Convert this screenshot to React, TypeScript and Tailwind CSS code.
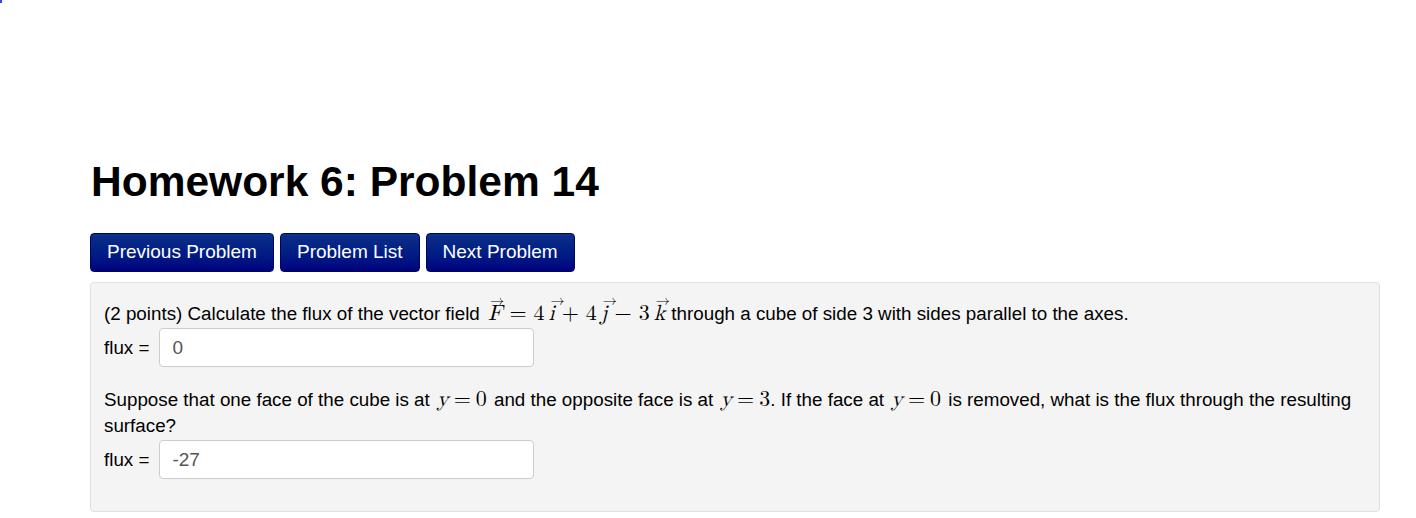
const mathFont = { fontFamily: '"Latin Modern Math", "DejaVu Serif", "Liberation Serif", serif' };

function Vec({ ch, lead = false }: { ch: string; lead?: boolean }) {
  return (
    <span className={`relative inline-block italic ${lead ? "ml-[4px]" : ""}`}>
      <span className="absolute left-[2px] top-[-0.58em] text-[14px] not-italic leading-none">→</span>
      {ch}
    </span>
  );
}

function Op({ c, narrow = false }: { c: string; narrow?: boolean }) {
  return <span className={narrow ? "mx-[5px]" : "mx-[7px]"}>{c}</span>;
}

function M({ children, cls = "mx-[3px]" }: { children: React.ReactNode; cls?: string }) {
  return (
    <span className={`text-[22px] leading-none ${cls}`} style={mathFont}>
      {children}
    </span>
  );
}

function Answer({ value }: { value: string }) {
  return (
    <div className="flex items-center gap-[10px]">
      <span>flux =</span>
      <input
        readOnly
        value={value}
        className="w-[375px] h-[39px] px-[12px] border border-[#cccccc] rounded-[4px] bg-white text-[#555555] text-[19px] outline-none"
      />
    </div>
  );
}

export default function App() {
  return (
    <div className="min-h-screen bg-white text-black" style={{ fontFamily: '"Liberation Sans", Arial, sans-serif' }}>
      <div className="w-[2px] h-[3px] bg-[#3040ff]" />
      <div className="ml-[90px] w-[1290px] pt-[152px]">
        <h1 className="text-[42.5px] font-bold leading-[54px] ml-[1px]">Homework 6: Problem 14</h1>
        <div className="flex gap-[6px] mt-[24px]">
          {["Previous Problem", "Problem List", "Next Problem"].map((t) => (
            <button
              key={t}
              className="h-[39px] px-[16px] rounded-[4px] text-white text-[19px] bg-gradient-to-b from-[#0e2f8a] to-[#00007f] border border-[#00065a]"
            >
              {t}
            </button>
          ))}
        </div>
        <div className="mt-[10px] h-[230px] bg-[#f4f4f4] border border-[#e0e0e0] rounded-[4px] px-[13px] pt-[18px] text-[18.8px] leading-[26px]">
          <p>
            (2 points) Calculate the flux of the vector field{" "}
            <M cls="ml-[3px] mr-[6px]">
              <Vec ch="F" />
              <Op c="=" />4<Vec ch="i" lead />
              <Op c="+" />4<Vec ch="j" lead />
              <Op c="−" />3<Vec ch="k" lead />
            </M>
            through a cube of side 3 with sides parallel to the axes.
          </p>
          <div className="mt-[1px]">
            <Answer value="0" />
          </div>
          <p className="mt-[20px]">
            Suppose that one face of the cube is at{" "}
            <M cls="mx-[2px]">
              <i>y</i>
              <Op c="=" narrow />0
            </M>{" "}
            and the opposite face is at{" "}
            <M cls="ml-[2px]">
              <i>y</i>
              <Op c="=" narrow />3
            </M>
            . If the face at{" "}
            <M cls="mx-[2px]">
              <i>y</i>
              <Op c="=" narrow />0
            </M>{" "}
            is removed, what is the flux through the resulting surface?
          </p>
          <div className="mt-[1px]">
            <Answer value="-27" />
          </div>
        </div>
      </div>
    </div>
  );
}
